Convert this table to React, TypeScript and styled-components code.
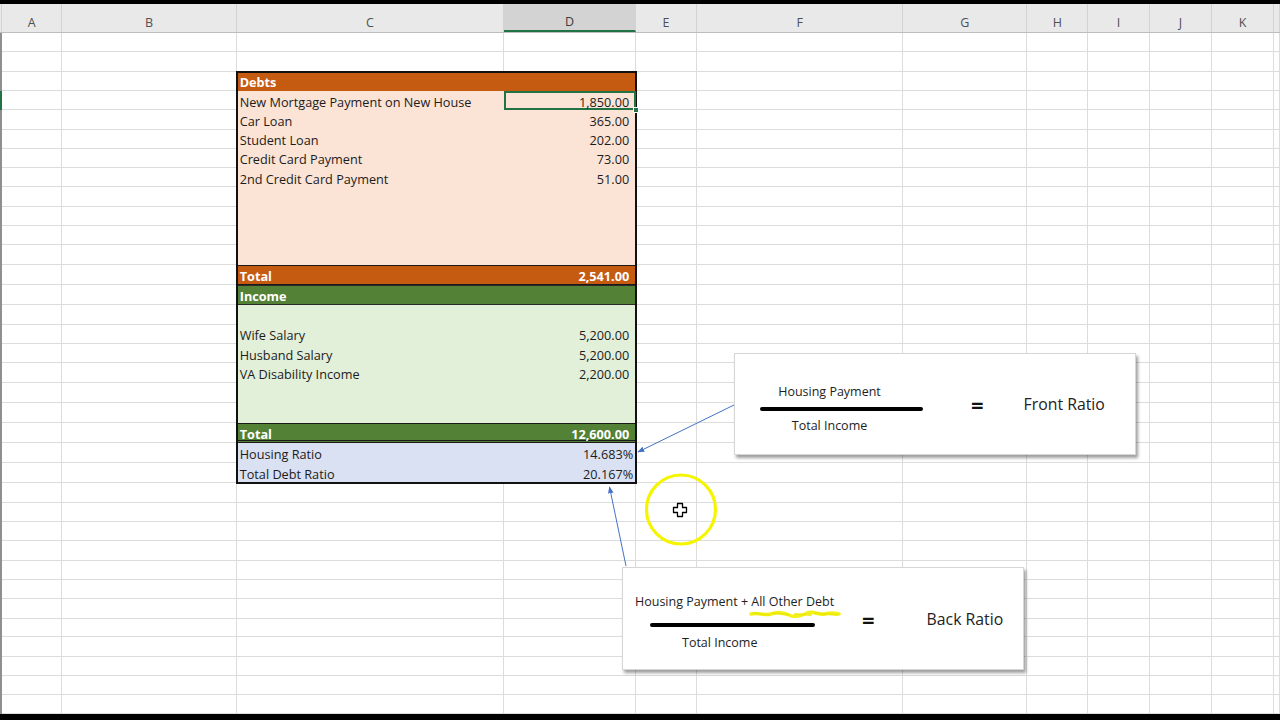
import React from "react";
import styled, { createGlobalStyle, css } from "styled-components";

const GlobalStyle = createGlobalStyle`
  html, body { margin: 0; padding: 0; background: #000; }
  body { font-family: "Open Sans", "Liberation Sans", sans-serif; }
  *, *::before, *::after { box-sizing: border-box; }
`;

const COLS = [2, 60.3, 174.4, 267.6, 131.4, 61.6, 206, 124, 61, 61.7, 62, 62];
const COL_TEMPLATE = COLS.map((c) => `${c}px`).join(" ") + " 1fr";
const LETTERS = ["", "A", "B", "C", "D", "E", "F", "G", "H", "I", "J", "K", ""];
const ROWS = [
  19, 20, 19.3, 19.3, 19.4, 19, 19.3, 19.3, 19.4, 19.3, 19.3, 19.4, 20, 20, 20, 19.3, 19.3, 20, 20,
  19.4, 20, 20.6, 20, 19.4, 19.3, 19.3, 19.4, 19.3, 19.3, 19.4, 18.6, 19.4, 19.3, 19.3, 18.7,
];
const ROW_TEMPLATE = ROWS.map((r) => `${r}px`).join(" ");
const TABLE_FIRST = 3;
const TABLE_LAST = 23;
const TABLE_ROWS = ROWS.slice(TABLE_FIRST - 1, TABLE_LAST).map((r) => `${r}px`).join(" ");

type Kind = "debtHead" | "debt" | "debtTotal" | "incHead" | "inc" | "incTotal" | "ratio";

interface TableLine {
  kind: Kind;
  label?: string;
  value?: string;
  pct?: boolean;
  selected?: boolean;
}

const TABLE: TableLine[] = [
  { kind: "debtHead", label: "Debts" },
  { kind: "debt", label: "New Mortgage Payment on New House", value: "1,850.00", selected: true },
  { kind: "debt", label: "Car Loan", value: "365.00" },
  { kind: "debt", label: "Student Loan", value: "202.00" },
  { kind: "debt", label: "Credit Card Payment", value: "73.00" },
  { kind: "debt", label: "2nd Credit Card Payment", value: "51.00" },
  { kind: "debt" },
  { kind: "debt" },
  { kind: "debt" },
  { kind: "debt" },
  { kind: "debtTotal", label: "Total", value: "2,541.00" },
  { kind: "incHead", label: "Income" },
  { kind: "inc" },
  { kind: "inc", label: "Wife Salary", value: "5,200.00" },
  { kind: "inc", label: "Husband Salary", value: "5,200.00" },
  { kind: "inc", label: "VA Disability Income", value: "2,200.00" },
  { kind: "inc" },
  { kind: "inc" },
  { kind: "incTotal", label: "Total", value: "12,600.00" },
  { kind: "ratio", label: "Housing Ratio", value: "14.683%", pct: true },
  { kind: "ratio", label: "Total Debt Ratio", value: "20.167%", pct: true },
];

const Frame = styled.div`
  position: relative;
  width: 1280px;
  height: 720px;
  background: #000;
  padding: 4.3px 0 6px;
  display: flex;
  flex-direction: column;
  overflow: hidden;
`;

const Sheet = styled.div`
  flex: 1;
  background: #fff;
  display: flex;
  flex-direction: column;
  overflow: hidden;
`;

const HeaderRow = styled.div`
  display: grid;
  grid-template-columns: ${COL_TEMPLATE};
  height: 28.4px;
  background: #e9e9e9;
  border-bottom: 1px solid #bdbdbd;
`;

const HeaderCell = styled.div<{ $active?: boolean }>`
  display: flex;
  align-items: flex-end;
  justify-content: center;
  padding-bottom: 1px;
  font-size: 12.5px;
  color: #505050;
  border-right: 1px solid #d3d3d3;
  ${(p) =>
    p.$active &&
    css`
      background: #d3d3d3;
      color: #3c3c3c;
      border-bottom: 2px solid #217346;
      padding-bottom: 0;
    `}
`;

const Body = styled.div`
  flex: 1;
  display: grid;
  grid-template-columns: ${COL_TEMPLATE};
  grid-template-rows: ${ROW_TEMPLATE};
`;

const GridCell = styled.div`
  border-right: 1px solid #dcdcdc;
  border-bottom: 1px solid #dcdcdc;
`;

const EdgeCell = styled.div<{ $active?: boolean }>`
  background: ${(p) => (p.$active ? "#217346" : "#8f8f8f")};
`;

const TableBox = styled.div<{ $rows: string }>`
  grid-column: 4 / 6;
  grid-row: ${TABLE_FIRST} / ${TABLE_LAST + 1};
  display: grid;
  grid-template-rows: ${(p) => p.$rows};
  outline: 2px solid #111;
  outline-offset: -1px;
  position: relative;
  z-index: 1;
`;

const kindStyles: Record<Kind, ReturnType<typeof css>> = {
  debtHead: css`
    background: #c55a11;
    color: #fff;
    font-weight: 700;
  `,
  debt: css`
    background: #fbe4d5;
    color: #1c1c1c;
  `,
  debtTotal: css`
    background: #c55a11;
    color: #fff;
    font-weight: 700;
    border-top: 1px solid #1a1a1a;
    border-bottom: 1px solid #1a1a1a;
  `,
  incHead: css`
    background: #538135;
    color: #fff;
    font-weight: 700;
    border-top: 1px solid #2a2a2a;
    border-bottom: 1px solid #2a2a2a;
  `,
  inc: css`
    background: #e2efd9;
    color: #1c1c1c;
  `,
  incTotal: css`
    background: #538135;
    color: #fff;
    font-weight: 700;
    border-top: 1px solid #1a1a1a;
    border-bottom: 3px double #1a1a1a;
  `,
  ratio: css`
    background: #d9e1f2;
    color: #1c1c1c;
  `,
};

const TRow = styled.div<{ $kind: Kind }>`
  display: grid;
  grid-template-columns: 1fr 131.4px;
  align-items: stretch;
  font-size: 12.7px;
  line-height: 16px;
  ${(p) => kindStyles[p.$kind]}
`;

const Label = styled.div`
  display: flex;
  align-items: center;
  padding: 2px 0 0 3px;
  white-space: nowrap;
`;

const Value = styled.div<{ $pct?: boolean; $selected?: boolean }>`
  position: relative;
  display: flex;
  align-items: center;
  justify-content: flex-end;
  padding-top: 2px;
  padding-right: ${(p) => (p.$pct ? "2.5px" : "6.5px")};
  white-space: nowrap;
  ${(p) =>
    p.$selected &&
    css`
      box-shadow: inset 0 0 0 2px #217346;
    `}
`;

const FillHandle = styled.span`
  position: absolute;
  right: -3px;
  bottom: -3px;
  width: 6px;
  height: 6px;
  background: #217346;
  border: 1px solid #fff;
  z-index: 2;
`;

const Overlay = styled.svg<{ $z: number }>`
  position: absolute;
  left: 0;
  top: 0;
  width: 1280px;
  height: 720px;
  pointer-events: none;
  z-index: ${(p) => p.$z};
`;

const Shape = styled.div<{ $left: number; $top: number; $w: number; $h: number }>`
  position: absolute;
  left: ${(p) => p.$left}px;
  top: ${(p) => p.$top}px;
  width: ${(p) => p.$w}px;
  height: ${(p) => p.$h}px;
  background: #fff;
  border: 1px solid #d6d6d6;
  box-shadow: 2px 3px 3px rgba(0, 0, 0, 0.38);
  display: flex;
  align-items: center;
  z-index: 3;
  color: #1e1e1e;
`;

const Fraction = styled.div<{ $width: number; $left: number; $padTop: number }>`
  width: ${(p) => p.$width}px;
  margin-left: ${(p) => p.$left}px;
  padding-top: ${(p) => p.$padTop}px;
  display: flex;
  flex-direction: column;
`;

const FracText = styled.div<{ $indent?: number; $centerShift?: number }>`
  font-size: 12.5px;
  line-height: 16px;
  white-space: nowrap;
  margin-left: ${(p) => p.$indent ?? 0}px;
  ${(p) =>
    p.$centerShift !== undefined &&
    css`
      text-align: center;
      padding-right: ${p.$centerShift * 2}px;
    `}
`;

const FracBar = styled.div<{ $width: number; $indent?: number; $gapTop: number; $gapBottom: number }>`
  width: ${(p) => p.$width}px;
  height: 4px;
  background: #000;
  border-radius: 2px;
  margin: ${(p) => p.$gapTop}px 0 ${(p) => p.$gapBottom}px ${(p) => p.$indent ?? 0}px;
`;

const Equals = styled.div<{ $left: number }>`
  margin-left: ${(p) => p.$left}px;
  font-size: 22px;
  font-weight: 700;
  line-height: 1;
  color: #111;
`;

const RatioName = styled.div<{ $left: number }>`
  margin-left: ${(p) => p.$left}px;
  font-size: 15.8px;
  white-space: nowrap;
  color: #222;
`;

const Scribble = styled.svg`
  position: absolute;
  left: 126px;
  top: 42px;
  width: 92px;
  height: 8px;
`;

function GridCells() {
  const cells: React.ReactNode[] = [];
  for (let r = 1; r <= ROWS.length; r++) {
    for (let c = 1; c <= LETTERS.length; c++) {
      const inTable = (c === 4 || c === 5) && r >= TABLE_FIRST && r <= TABLE_LAST;
      if (inTable) continue;
      if (c === 1) cells.push(<EdgeCell key={`${r}-${c}`} $active={r === 4} />);
      else cells.push(<GridCell key={`${r}-${c}`} />);
    }
  }
  return <>{cells}</>;
}

function BudgetTable() {
  return (
    <TableBox $rows={TABLE_ROWS}>
      {TABLE.map((line, i) => (
        <TRow key={i} $kind={line.kind}>
          <Label>{line.label}</Label>
          <Value $pct={line.pct} $selected={line.selected}>
            {line.value}
            {line.selected && <FillHandle />}
          </Value>
        </TRow>
      ))}
    </TableBox>
  );
}

function Arrows() {
  return (
    <Overlay $z={2} viewBox="0 0 1280 720">
      <defs>
        <marker id="ah" viewBox="0 0 10 10" refX="9" refY="5" markerWidth="7" markerHeight="7" orient="auto-start-reverse">
          <path d="M0,1 L10,5 L0,9 z" fill="#4472c4" />
        </marker>
      </defs>
      <line x1="734" y1="405" x2="638" y2="452" stroke="#4472c4" strokeWidth="1" markerEnd="url(#ah)" />
      <line x1="626" y1="566" x2="609.5" y2="487" stroke="#4472c4" strokeWidth="1" markerEnd="url(#ah)" />
    </Overlay>
  );
}

function Pointer() {
  return (
    <Overlay $z={4} viewBox="0 0 1280 720">
      <circle cx="681" cy="509.5" r="34.5" fill="none" stroke="#f5f500" strokeWidth="3.2" />
      <path
        d="M677.5 503.5 h5 v4 h4 v5 h-4 v4 h-5 v-4 h-4 v-5 h4 z"
        fill="#fff"
        stroke="#000"
        strokeWidth="1.3"
        strokeLinejoin="round"
      />
    </Overlay>
  );
}

export default function App() {
  return (
    <>
      <GlobalStyle />
      <Frame>
        <Sheet>
          <HeaderRow>
            {LETTERS.map((l, i) => (
              <HeaderCell key={i} $active={l === "D"}>
                {l}
              </HeaderCell>
            ))}
          </HeaderRow>
          <Body>
            <BudgetTable />
            <GridCells />
          </Body>
        </Sheet>

        <Arrows />

        <Shape $left={734} $top={353} $w={402} $h={102}>
          <Fraction $width={163} $left={25} $padTop={10}>
            <FracText $centerShift={12}>Housing Payment</FracText>
            <FracBar $width={163} $gapTop={7} $gapBottom={7} />
            <FracText $centerShift={12}>Total Income</FracText>
          </Fraction>
          <Equals $left={48}>=</Equals>
          <RatioName $left={40}>Front Ratio</RatioName>
        </Shape>

        <Shape $left={622} $top={567} $w={402} $h={103}>
          <Fraction $width={205} $left={12} $padTop={8}>
            <FracText>Housing Payment + All Other Debt</FracText>
            <FracBar $width={165} $indent={15} $gapTop={13} $gapBottom={8} />
            <FracText $indent={47}>Total Income</FracText>
          </Fraction>
          <Equals $left={22}>=</Equals>
          <RatioName $left={52}>Back Ratio</RatioName>
          <Scribble viewBox="0 0 92 8">
            <path
              d="M2 4 C10 2 14 6 22 4 S34 2 40 5 S52 6 58 3 S70 6 76 4 S86 3 90 4"
              fill="none"
              stroke="#f2f000"
              strokeWidth="3.5"
              strokeLinecap="round"
              opacity="0.9"
            />
            <path
              d="M4 3 L20 5 M24 3 L40 5 M46 4 L62 5 M66 3 L88 5"
              fill="none"
              stroke="#e8e800"
              strokeWidth="2"
              strokeLinecap="round"
              opacity="0.8"
            />
          </Scribble>
        </Shape>

        <Pointer />
      </Frame>
    </>
  );
}
